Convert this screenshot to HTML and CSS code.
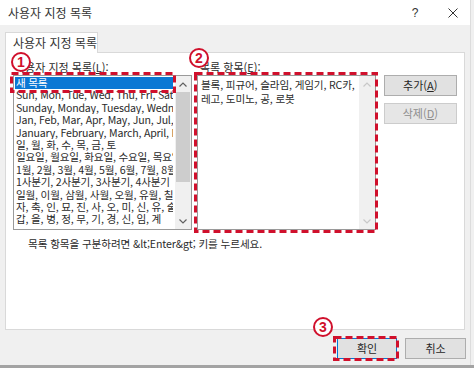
FILE: index.html
```html
<!DOCTYPE html>
<html lang="ko">
<head>
<meta charset="utf-8">
<title>사용자 지정 목록</title>
<link rel="stylesheet" href="styles.css">
</head>
<body>
<div class="window">
  <div class="titlebar">
    <span class="title">사용자 지정 목록</span>
    <span class="help">?</span>
    <svg class="close" width="10" height="10" viewBox="0 0 10 10"><path d="M0.5 0.5 L9.5 9.5 M9.5 0.5 L0.5 9.5"/></svg>
  </div>
  <div class="body">
    <div class="tabs"><div class="tab">사용자 지정 목록</div></div>
    <div class="page">
      <div class="columns">
        <div class="col col-left">
          <div class="label">사용자 지정 목록(<u>L</u>):</div>
          <div class="listbox">
            <div class="items">
              <div class="item selected">새 목록</div>
              <div class="item">Sun, Mon, Tue, Wed, Thu, Fri, Sat</div>
              <div class="item">Sunday, Monday, Tuesday, Wednesday, Thursday, Friday, Saturday</div>
              <div class="item">Jan, Feb, Mar, Apr, May, Jun, Jul, Aug, Sep, Oct, Nov, Dec</div>
              <div class="item">January, February, March, April, May, June, July, August, September, October, November, December</div>
              <div class="item">일, 월, 화, 수, 목, 금, 토</div>
              <div class="item">일요일, 월요일, 화요일, 수요일, 목요일, 금요일, 토요일</div>
              <div class="item">1월, 2월, 3월, 4월, 5월, 6월, 7월, 8월, 9월, 10월, 11월, 12월</div>
              <div class="item">1사분기, 2사분기, 3사분기, 4사분기</div>
              <div class="item">일월, 이월, 삼월, 사월, 오월, 유월, 칠월, 팔월, 구월, 시월, 십일월, 십이월</div>
              <div class="item">자, 축, 인, 묘, 진, 사, 오, 미, 신, 유, 술, 해</div>
              <div class="item">갑, 을, 병, 정, 무, 기, 경, 신, 임, 계</div>
            </div>
            <div class="scrollbar">
              <div class="sb-btn"><svg width="8" height="5" viewBox="0 0 8 5"><path d="M0.5 4.5 L4 1 L7.5 4.5"/></svg></div>
              <div class="sb-track"><div class="sb-thumb"></div></div>
              <div class="sb-btn"><svg width="8" height="5" viewBox="0 0 8 5"><path d="M0.5 0.5 L4 4 L7.5 0.5"/></svg></div>
            </div>
          </div>
        </div>
        <div class="col col-mid">
          <div class="label label-mid">목록 항목(<u>E</u>):</div>
          <div class="editbox">
            <div class="edit-text">블록, 피규어, 슬라임, 게임기, RC카,<br>레고, 도미노, 공, 로봇</div>
            <div class="scrollbar disabled">
              <div class="sb-btn"><svg width="8" height="5" viewBox="0 0 8 5"><path d="M0.5 4.5 L4 1 L7.5 4.5"/></svg></div>
              <div class="sb-track"></div>
              <div class="sb-btn"><svg width="8" height="5" viewBox="0 0 8 5"><path d="M0.5 0.5 L4 4 L7.5 0.5"/></svg></div>
            </div>
          </div>
        </div>
        <div class="col col-buttons">
          <button class="btn">추가(<u>A</u>)</button>
          <button class="btn" disabled>삭제(<u>D</u>)</button>
        </div>
      </div>
      <p class="hint">목록 항목을 구분하려면 &amp;lt;Enter&amp;gt; 키를 누르세요.</p>
    </div>
    <div class="footer">
      <button class="btn btn-ok">확인</button>
      <button class="btn btn-cancel">취소</button>
    </div>
  </div>

  <svg class="mark mark-1" width="166" height="21"><rect x="1.5" y="1.5" width="163" height="18"/></svg>
  <svg class="mark mark-2" width="184" height="161"><rect x="1.5" y="1.5" width="181" height="158"/></svg>
  <svg class="mark mark-3" width="66" height="25"><rect x="1.5" y="1.5" width="63" height="22"/></svg>
  <div class="badge badge-1">1</div>
  <div class="badge badge-2">2</div>
  <div class="badge badge-3">3</div>
</div>
<div class="strip"></div>
</body>
</html>
```

FILE: styles.css
```css
* { box-sizing: border-box; }
html, body { margin: 0; padding: 0; }
body {
  width: 474px;
  height: 368px;
  overflow: hidden;
  background: #f0f0f0;
  font-family: "Noto Sans CJK KR", "Noto Sans", sans-serif;
  font-size: 11px;
  color: #2b2b2b;
}
u { text-decoration: underline; text-underline-offset: 1px; }

.window {
  position: relative;
  width: 471px;
  height: 365px;
  display: flex;
  flex-direction: column;
  background: #f0f0f0;
  border-right: 1px solid #dcdcdc;
}

.titlebar {
  height: 25px;
  flex: none;
  background: #fff;
  display: flex;
  align-items: center;
  padding-left: 8px;
  padding-right: 12px;
  font-size: 12px;
  color: #333;
}
.title { flex: 1; }
.help { width: 12px; text-align: center; margin-right: 27px; font-size: 12px; font-family: "Liberation Sans", sans-serif; }
.close path { stroke: #333; stroke-width: 1; fill: none; }

.body {
  flex: 1;
  display: flex;
  flex-direction: column;
  padding: 7px 5px 0 5px;
}

.tabs { display: flex; height: 20px; flex: none; }
.tab {
  width: 93px;
  height: 21px;
  background: #fff;
  border: 1px solid #d9d9d9;
  border-bottom: none;
  font-size: 12px;
  line-height: 20px;
  padding-left: 7px;
  color: #333;
  position: relative;
  z-index: 1;
}

.page {
  flex: none;
  height: 278px;
  background: #fff;
  border: 1px solid #d9d9d9;
  padding: 8px 7px 0 7px;
}

.columns { display: flex; align-items: flex-start; }
.col { display: flex; flex-direction: column; }
.col-left { width: 179px; }
.col-mid { width: 180px; margin-left: 5px; }
.col-buttons { width: 74px; margin-left: 8px; padding-top: 14px; gap: 7px; }

.label {
  height: 13px;
  line-height: 13px;
  margin-bottom: 1px;
  padding-left: 2px;
  white-space: nowrap;
}
.label-mid { padding-left: 3px; }

.listbox, .editbox {
  height: 155px;
  border: 1px solid #9a9a9a;
  display: flex;
  background: #fff;
}
.items {
  flex: 1;
  overflow: hidden;
  padding: 1px 2px 0 1px;
  font-size: 10.6px;
  letter-spacing: -0.2px;
}
.item {
  height: 12.4px;
  line-height: 12.4px;
  white-space: nowrap;
  padding-left: 1px;
  overflow: hidden;
}
.item.selected {
  background: #0a78d4;
  color: #fff;
}

.scrollbar {
  width: 16px;
  flex: none;
  display: flex;
  flex-direction: column;
  background: #f0f0f0;
}
.sb-btn {
  height: 16px;
  display: flex;
  align-items: center;
  justify-content: center;
}
.sb-btn path { fill: none; stroke: #606060; stroke-width: 1.2; }
.sb-track { flex: 1; padding: 0 1px; }
.sb-thumb { height: 90px; background: #cdcdcd; }
.scrollbar.disabled .sb-btn path { stroke: #c8c8c8; }

.edit-text {
  flex: 1;
  padding: 2px 0 0 3px;
  line-height: 14px;
  font-size: 10.6px;
  letter-spacing: -0.15px;
  white-space: nowrap;
  overflow: hidden;
}

.btn {
  font-family: "Noto Sans CJK KR", sans-serif;
  font-size: 11px;
  height: 21px;
  padding: 0;
  background: #e1e1e1;
  border: 1px solid #adadad;
  color: #262626;
  line-height: 19px;
}
.btn:disabled {
  background: #e6e6e6;
  border-color: #cccccc;
  color: #8d8d8d;
}

.hint {
  margin: 7px 0 0 15px;
  line-height: 13px;
  font-size: 10.6px;
  letter-spacing: -0.1px;
}

.footer {
  flex: 1;
  display: flex;
  justify-content: flex-end;
  gap: 8px;
  padding-top: 8px;
  margin-right: -1px;
}
.btn-ok { width: 60px; border-color: #0078d7; }
.btn-cancel { width: 61px; }

.strip { height: 3px; background: #a3a3a3; }

/* annotation overlays */
.mark { position: absolute; overflow: visible; z-index: 5; }
.mark rect { fill: none; stroke: #d0102c; stroke-width: 3; stroke-dasharray: 7 4; }
.mark-1 { left: 10px; top: 72px; }
.mark-2 { left: 194px; top: 72px; }
.mark-3 { left: 333px; top: 336px; }

.badge {
  position: absolute;
  z-index: 6;
  width: 20px;
  height: 20px;
  border: 2px solid #d0102c;
  border-radius: 50%;
  background: #fff;
  color: #d0102c;
  font-family: "Liberation Sans", sans-serif;
  font-weight: bold;
  font-size: 14px;
  line-height: 16px;
  text-align: center;
}
.badge-1 { left: 11px; top: 52px; }
.badge-2 { left: 189px; top: 48px; }
.badge-3 { left: 313px; top: 317px; }
```
